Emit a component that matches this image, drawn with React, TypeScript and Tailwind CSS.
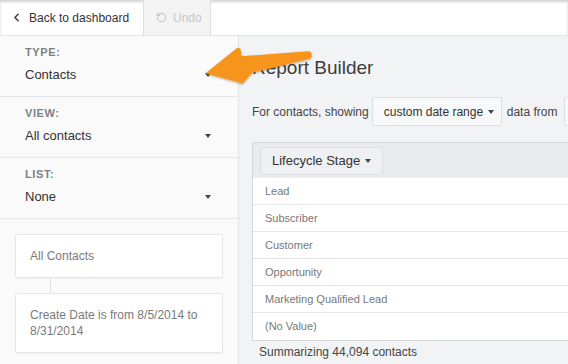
import { ChevronLeft, RotateCcw } from 'lucide-react'

function Caret({ className = '' }: { className?: string }) {
  return (
    <span
      className={`inline-block h-0 w-0 border-x-[3.5px] border-t-[4px] border-x-transparent border-t-[#444] ${className}`}
    />
  )
}

function SideSection({ label, value }: { label: string; value: string }) {
  return (
    <div className="h-[61px] border-b border-[#e3e5e7] pl-[25px] pr-[27px] pt-[9px]">
      <div className="text-[11px] font-bold leading-[14px] tracking-[0.6px] text-[#7c8186]">{label}</div>
      <div className="mt-[7px] flex items-center justify-between text-[13px] leading-[18px] text-[#333]">
        <span>{value}</span>
        <Caret />
      </div>
    </div>
  )
}

const stages = ['Lead', 'Subscriber', 'Customer', 'Opportunity', 'Marketing Qualified Lead', '(No Value)']

export default function App() {
  return (
    <div
      className="relative flex h-[364px] w-[568px] flex-col overflow-hidden bg-white"
      style={{ fontFamily: '"Liberation Sans", Arial, sans-serif' }}
    >
      {/* top bar */}
      <header className="flex h-[36px] shrink-0 items-stretch border-b border-[#e2e4e6] bg-white shadow-[inset_0_2px_3px_rgba(0,0,0,0.18)]">
        <button className="flex w-[143px] items-center gap-[6px] pl-[10px] text-[12px] text-[#333]">
          <ChevronLeft size={13} strokeWidth={3} className="text-[#444]" />
          Back to dashboard
        </button>
        <button className="flex w-[68px] items-center gap-[6px] border-x border-[#e0e0e0] bg-[#f3f3f3] pl-[12px] text-[12px] text-[#c6c6c6]">
          <RotateCcw size={11} strokeWidth={2.5} />
          Undo
        </button>
      </header>

      <div className="flex min-h-0 flex-1">
        {/* sidebar */}
        <aside className="w-[239px] shrink-0 border-r border-[#e3e5e7] bg-[#fafafa]">
          <SideSection label="TYPE:" value="Contacts" />
          <SideSection label="VIEW:" value="All contacts" />
          <SideSection label="LIST:" value="None" />
          <div className="px-[15px] pt-[15px]">
            <div className="flex h-[44px] items-center rounded-[2px] border border-[#e6e6e6] bg-white px-[14px] text-[12px] text-[#7a7a7a] shadow-[0_1px_1px_rgba(0,0,0,0.04)]">
              All Contacts
            </div>
            <div className="ml-[35px] h-[15px] w-px bg-[#e2e2e2]" />
            <div className="flex h-[60px] items-center rounded-[2px] border border-[#e6e6e6] bg-white px-[14px] text-[12px] leading-[16px] text-[#7a7a7a] shadow-[0_1px_1px_rgba(0,0,0,0.04)]">
              Create Date is from 8/5/2014 to 8/31/2014
            </div>
          </div>
        </aside>

        {/* main */}
        <main className="min-w-0 flex-1 overflow-hidden bg-[#f2f3f5] pl-[13px]">
          <h1 className="mt-[20px] text-[19px] font-light leading-[24px] text-[#3d3d3d]">Report Builder</h1>
          <div className="mt-[17px] flex items-center whitespace-nowrap text-[12px] text-[#444]">
            <span>For contacts, showing</span>
            <button className="ml-[3px] flex h-[29px] w-[130px] shrink-0 items-center gap-[5px] rounded-[2px] border border-[#dcdfe2] bg-[#f7f8f9] pl-[11px] text-[12px] text-[#333]">
              custom date range
              <Caret />
            </button>
            <span className="ml-[5px]">data from</span>
            <div className="ml-[7px] h-[29px] w-[80px] shrink-0 rounded-[2px] border border-[#dcdfe2] bg-[#f7f8f9]" />
          </div>

          <div className="mt-[16px] w-[520px] border border-[#d4d8db] bg-white">
            <div className="flex h-[35px] items-center bg-[#e9ebed] px-[7px]">
              <button className="flex h-[28px] items-center gap-[5px] rounded-[2px] border border-[#dcdfe2] bg-[#eef0f1] px-[11px] text-[13px] text-[#333]">
                Lifecycle Stage
                <Caret />
              </button>
            </div>
            {stages.map((s, i) => (
              <div
                key={s}
                className={`flex h-[27px] items-center pl-[12px] text-[11px] text-[#777] ${i < stages.length - 1 ? 'border-b border-[#e4e6e8]' : ''}`}
              >
                {s}
              </div>
            ))}
          </div>
          <div className="mt-[4px] pl-[7px] text-[12px] leading-[14px] text-[#444]">Summarizing 44,094 contacts</div>
        </main>
      </div>

      {/* annotation arrow */}
      <svg className="pointer-events-none absolute left-0 top-0" width="568" height="364">
        <defs>
          <filter id="sh" x="-20%" y="-20%" width="140%" height="140%">
            <feDropShadow dx="0" dy="1" stdDeviation="1.2" floodColor="#000" floodOpacity="0.3" />
          </filter>
        </defs>
        <path
          d="M207 73 L237 49 Q239 47.5 240 50 L241 57 L308 52 Q311 52 311 55 Q311 58 308 58.5 L252 72 L244 81 Q242 84 240 82 Z"
          fill="#f7941d"
          stroke="#f7941d"
          strokeWidth="1.5"
          strokeLinejoin="round"
          filter="url(#sh)"
        />
      </svg>
    </div>
  )
}
